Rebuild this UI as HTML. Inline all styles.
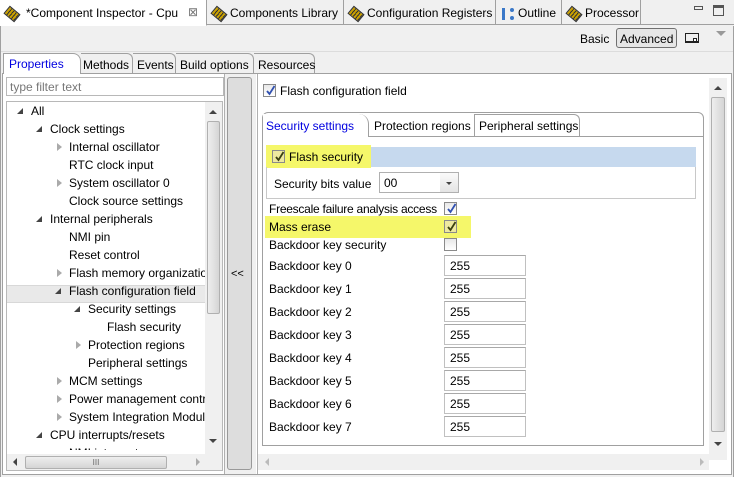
<!DOCTYPE html>
<html><head><meta charset="utf-8"><style>
*{box-sizing:border-box;margin:0;padding:0}
body{width:734px;height:477px;background:#f0f0f0;font-family:"Liberation Sans",sans-serif;font-size:12px;color:#000;position:relative;overflow:hidden}
.a{position:absolute;white-space:nowrap}
.tab{position:absolute;top:0;height:25px;border-right:1px solid #a0a0a0;padding:6px 0 0 0}
.chip{display:inline-block;width:14px;height:10px;background:repeating-linear-gradient(90deg,#c9a000 0 2px,#333 2px 3px);transform:rotate(40deg);border:1px solid #333;vertical-align:middle;margin:0 4px 0 5px}
.t{position:absolute;white-space:nowrap}
.arr{position:absolute;width:0;height:0}
.open{border-left:6px solid transparent;border-bottom:6px solid #444;border-right:0}
.closed{border:4px solid transparent;border-left:5px solid #aaa;border-right:0}
.cb{position:absolute;width:13px;height:13px;border:1px solid #8a8a8a;background:linear-gradient(#e8e8e8,#fff)}
.cb svg{position:absolute;left:1px;top:0}
.in{position:absolute;left:444px;width:82px;height:21px;border:1px solid #c0c0c0;border-top-color:#a8a8a8;background:#fff;padding:3px 0 0 5px}
</style></head><body>
<div class="a" style="left:0;top:0;width:734px;height:25px;background:#f0f0f0;border-bottom:1px solid #a0a0a0"></div>
<div class="tab" style="left:0;width:207px;background:#fff;border-bottom:1px solid #fff;height:26px"><span class="chip"></span><span style="margin-left:3px">*Component Inspector - Cpu</span><span style="position:absolute;left:188px;top:5px;color:#777">⊠</span></div>
<div class="tab" style="left:207px;width:137px"><span class="chip"></span>Components Library</div>
<div class="tab" style="left:344px;width:152px"><span class="chip"></span>Configuration Registers</div>
<div class="tab" style="left:496px;width:66px"><span style="display:inline-block;width:12px;height:12px;margin:0 4px 0 6px;border-left:3px solid #3a78c8;border-right:4px dotted #3a78c8;vertical-align:middle"></span>Outline</div>
<div class="tab" style="left:562px;width:79px"><span class="chip"></span>Processor</div>
<div class="a" style="left:694px;top:6px;width:9px;height:4px;border:1px solid #555"></div>
<div class="a" style="left:713px;top:5px;width:11px;height:11px;border:1px solid #555;border-top-width:3px"></div>
<div class="a" style="left:0;top:26px;width:734px;height:451px;background:#f0f0f0;border-left:1px solid #a0a0a0;border-right:1px solid #a0a0a0"></div>
<div class="a" style="left:580px;top:32px">Basic</div>
<div class="a" style="left:616px;top:28px;width:61px;height:20px;border:1px solid #707070;border-radius:3px;background:#e6e6e6;padding:3px 0 0 3px">Advanced</div>
<div class="a" style="left:685px;top:33px;width:14px;height:10px;border:1px solid #222;border-bottom-width:2px"></div>
<div class="a" style="left:693px;top:38px;width:4px;height:4px;border:1px solid #222;background:#fff"></div>
<div class="a" style="left:716px;top:31px;border:5px solid transparent;border-top:5px solid #999"></div>
<div class="a" style="left:1px;top:51px;width:732px;height:1px;background:#dcdcdc"></div>
<div class="a" style="left:2px;top:73px;width:730px;height:1px;background:#a0a0a0"></div>
<div class="a" style="left:3px;top:53px;width:78px;height:21px;background:#fff;border:1px solid #a0a0a0;border-bottom:none;border-radius:0 8px 0 0;padding:3px 0 0 5px;color:#0000e0">Properties</div>
<div class="a" style="left:81px;top:53px;width:52px;height:20px;border-right:1px solid #a0a0a0;border-top:1px solid #a0a0a0;border-radius:0 6px 0 0;padding:4px 0 0 2px">Methods</div>
<div class="a" style="left:133px;top:53px;width:43px;height:20px;border-right:1px solid #a0a0a0;border-top:1px solid #a0a0a0;border-radius:0 6px 0 0;padding:4px 0 0 4px">Events</div>
<div class="a" style="left:176px;top:53px;width:78px;height:20px;border-right:1px solid #a0a0a0;border-top:1px solid #a0a0a0;border-radius:0 6px 0 0;padding:4px 0 0 4px">Build options</div>
<div class="a" style="left:254px;top:53px;width:61px;height:20px;border-right:1px solid #a0a0a0;border-top:1px solid #a0a0a0;border-radius:0 6px 0 0;padding:4px 0 0 4px">Resources</div>
<div class="a" style="left:2px;top:74px;width:730px;height:401px;background:#fff;border:1px solid #a0a0a0;border-top:none"></div>
<div class="a" style="left:3px;top:74px;width:222px;height:400px;background:#fff;border-right:1px solid #b0b0b0"></div>
<div class="a" style="left:6px;top:77px;width:218px;height:19px;border:1px solid #b8b8b8;padding:2px 0 0 3px;color:#777">type filter text</div>
<div class="a" style="left:6px;top:101px;width:217px;height:370px;border:1px solid #b8b8b8;overflow:hidden">
 <div class="a" style="left:0;top:183px;width:199px;height:18px;background:#e9e9e9;border-top:1px solid #d8d8d8;border-bottom:1px solid #d8d8d8"></div>
</div>
<div id="tree"></div>
<div class="a" style="left:205px;top:102px;width:17px;height:352px;background:#f0f0f0"></div>
<div class="a" style="left:209px;top:110px;border:4px solid transparent;border-bottom:4px solid #444;border-top:0"></div>
<div class="a" style="left:207px;top:121px;width:13px;height:193px;background:linear-gradient(90deg,#eee,#d5d5d5);border:1px solid #b0b0b0;border-radius:2px"></div>
<div class="a" style="left:209px;top:439px;border:4px solid transparent;border-top:4px solid #444;border-bottom:0"></div>
<div class="a" style="left:7px;top:454px;width:215px;height:16px;background:#f0f0f0"></div>
<div class="a" style="left:25px;top:456px;width:142px;height:13px;background:linear-gradient(#eee,#d5d5d5);border:1px solid #b0b0b0;border-radius:2px;text-align:center;font-size:8px;color:#666;line-height:11px">III</div>
<div class="a" style="left:13px;top:458px;border:4px solid transparent;border-right:4px solid #444;border-left:0"></div>
<div class="a" style="left:196px;top:458px;border:4px solid transparent;border-left:4px solid #aaa;border-right:0"></div>
<div class="a" style="left:225px;top:74px;width:31px;height:400px;background:#f0f0f0"></div>
<div class="a" style="left:227px;top:77px;width:25px;height:393px;border:1px solid #999;border-radius:3px;background:#ddd"></div>
<div class="a" style="left:231px;top:268px;font-size:11px">&lt;&lt;</div>
<div class="a" style="left:257px;top:74px;width:474px;height:400px;background:#fff;border-left:1px solid #b0b0b0"></div>
<div class="cb" style="left:263px;top:84px"><svg width="11" height="11"><path d="M2 6 L4.5 9 L9.5 1" stroke="#3050b0" stroke-width="1.8" fill="none"/></svg></div>
<div class="a" style="left:280px;top:84px">Flash configuration field</div>
<div class="a" style="left:262px;top:112px;width:442px;height:334px;border:1px solid #a0a0a0;border-radius:6px 6px 0 0"></div>
<div class="a" style="left:263px;top:136px;width:440px;height:309px;background:#fff;border-top:1px solid #a0a0a0"></div>
<div class="a" style="left:263px;top:114px;width:106px;height:23px;background:#fff;border-right:1px solid #a0a0a0;border-radius:0 10px 0 0;padding:5px 0 0 3px;color:#0000e0">Security settings</div>
<div class="a" style="left:369px;top:114px;width:106px;height:22px;border-right:1px solid #a0a0a0;padding:5px 0 0 5px">Protection regions</div>
<div class="a" style="left:475px;top:114px;width:105px;height:22px;border-right:1px solid #a0a0a0;border-top:1px solid #a0a0a0;border-radius:0 6px 0 0;padding:4px 0 0 4px">Peripheral settings</div>
<div class="a" style="left:266px;top:147px;width:430px;height:20px;background:#c6d9ee"></div>
<div class="a" style="left:266px;top:145px;width:105px;height:23px;background:#f5f76a"></div>
<div class="a" style="left:266px;top:167px;width:430px;height:32px;border:1px solid #c8c8c8;border-top:none"></div>
<div class="cb" style="left:272px;top:150px;background:#eee9a0"><svg width="11" height="11"><path d="M2 6 L4.5 9 L9.5 1" stroke="#3a4010" stroke-width="1.8" fill="none"/></svg></div>
<div class="a" style="left:289px;top:150px">Flash security</div>
<div class="a" style="left:274px;top:177px">Security bits value</div>
<div class="a" style="left:379px;top:172px;width:80px;height:21px;border:1px solid #b0b0b0;background:#fff;padding:3px 0 0 4px">00</div>
<div class="a" style="left:440px;top:173px;width:18px;height:19px;background:linear-gradient(#fafafa,#e4e4e4)"></div>
<div class="a" style="left:446px;top:182px;border:3px solid transparent;border-top:3px solid #444;border-bottom:0"></div>
<div class="a" style="left:269px;top:202px;letter-spacing:-0.25px">Freescale failure analysis access</div>
<div class="cb" style="left:444px;top:202px"><svg width="11" height="11"><path d="M2 6 L4.5 9 L9.5 1" stroke="#3050b0" stroke-width="1.8" fill="none"/></svg></div>
<div class="a" style="left:265px;top:216px;width:206px;height:22px;background:#f5f76a"></div>
<div class="a" style="left:269px;top:220px">Mass erase</div>
<div class="cb" style="left:444px;top:220px;background:#eee9a0"><svg width="11" height="11"><path d="M2 6 L4.5 9 L9.5 1" stroke="#3a4010" stroke-width="1.8" fill="none"/></svg></div>
<div class="a" style="left:269px;top:238px">Backdoor key security</div>
<div class="cb" style="left:444px;top:238px"></div>
<div id="keys"></div>
<div class="a" style="left:709px;top:78px;width:18px;height:382px;background:#f0f0f0"></div>
<div class="a" style="left:714px;top:86px;border:4px solid transparent;border-bottom:4px solid #444;border-top:0"></div>
<div class="a" style="left:711px;top:97px;width:14px;height:335px;background:linear-gradient(90deg,#eee,#d5d5d5);border:1px solid #b0b0b0;border-radius:2px"></div>
<div class="a" style="left:714px;top:442px;border:4px solid transparent;border-top:4px solid #444;border-bottom:0"></div>
<div class="a" style="left:258px;top:454px;width:451px;height:16px;background:#f0f0f0"></div>
<div class="a" style="left:265px;top:458px;border:4px solid transparent;border-right:4px solid #bbb;border-left:0"></div>
<div class="a" style="left:700px;top:458px;border:4px solid transparent;border-left:4px solid #bbb;border-right:0"></div>
<script>
var t=[["All",0,1,111],["Clock settings",1,1,129],["Internal oscillator",2,2,147],["RTC clock input",2,0,165],["System oscillator 0",2,2,183],["Clock source settings",2,0,201],["Internal peripherals",1,1,219],["NMI pin",2,0,237],["Reset control",2,0,255],["Flash memory organization",2,2,273],["Flash configuration field",2,1,291],["Security settings",3,1,309],["Flash security",4,0,327],["Protection regions",3,2,345],["Peripheral settings",3,0,363],["MCM settings",2,2,381],["Power management controller",2,2,399],["System Integration Module",2,2,417],["CPU interrupts/resets",1,1,435],["NMI interrupt",2,0,453]];
var h='';t.forEach(function(r){var x=31+r[1]*19;if(r[3]<450)h+='<div class="t" style="left:'+x+'px;top:'+(r[3]-7)+'px;width:'+(205-x)+'px;overflow:hidden">'+r[0]+'</div>';else h+='<div class="t" style="left:'+x+'px;top:'+(r[3]-7)+'px;height:4px;overflow:hidden">'+r[0]+'</div>';
if(r[2]==1)h+='<div class="arr open" style="left:'+(x-14)+'px;top:'+(r[3]-3)+'px"></div>';if(r[2]==2)h+='<div class="arr closed" style="left:'+(x-12)+'px;top:'+(r[3]-4)+'px"></div>';});
document.getElementById('tree').innerHTML=h;
var k='';for(var i=0;i<8;i++){var y=255+i*23;k+='<div class="a" style="left:269px;top:'+(y+4)+'px">Backdoor key '+i+'</div><div class="in" style="top:'+y+'px">255</div>';}
document.getElementById('keys').innerHTML=k;
</script>
</body></html>
